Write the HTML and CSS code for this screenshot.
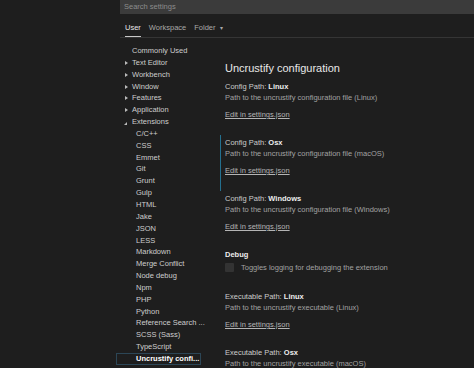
FILE: index.html
```html
<!DOCTYPE html>
<html>
<head>
    <title>Settings</title>
    <meta name="viewport" content="width=device-width, initial-scale=1.0">
    <link rel="stylesheet" href="styles.css">
</head>
<body>
    <div class="editor">
        <div class="search">Search settings</div>

        <div class="tabs">
            <span class="tab active">User</span>
            <span class="tab">Workspace</span>
            <span class="tab">Folder <span class="caret">&#9662;</span></span>
        </div>

        <div class="main">
            <ul class="tree">
                <li class="node">Commonly Used</li>
                <li class="node folder">Text Editor</li>
                <li class="node folder">Workbench</li>
                <li class="node folder">Window</li>
                <li class="node folder">Features</li>
                <li class="node folder">Application</li>
                <li class="node folder open">Extensions</li>
                <li class="node child">C/C++</li>
                <li class="node child">CSS</li>
                <li class="node child">Emmet</li>
                <li class="node child">Git</li>
                <li class="node child">Grunt</li>
                <li class="node child">Gulp</li>
                <li class="node child">HTML</li>
                <li class="node child">Jake</li>
                <li class="node child">JSON</li>
                <li class="node child">LESS</li>
                <li class="node child">Markdown</li>
                <li class="node child">Merge Conflict</li>
                <li class="node child">Node debug</li>
                <li class="node child">Npm</li>
                <li class="node child">PHP</li>
                <li class="node child">Python</li>
                <li class="node child">Reference Search ...</li>
                <li class="node child">SCSS (Sass)</li>
                <li class="node child">TypeScript</li>
                <li class="node child selected">Uncrustify confi...</li>
            </ul>

            <div class="content">
                <h2>Uncrustify configuration</h2>

                <div class="setting">
                    <div class="label">Config Path: <b>Linux</b></div>
                    <div class="desc">Path to the uncrustify configuration file (Linux)</div>
                    <a class="edit">Edit in settings.json</a>
                </div>

                <div class="setting focused">
                    <div class="label">Config Path: <b>Osx</b></div>
                    <div class="desc">Path to the uncrustify configuration file (macOS)</div>
                    <a class="edit">Edit in settings.json</a>
                </div>

                <div class="setting">
                    <div class="label">Config Path: <b>Windows</b></div>
                    <div class="desc">Path to the uncrustify configuration file (Windows)</div>
                    <a class="edit">Edit in settings.json</a>
                </div>

                <div class="setting debug">
                    <div class="label"><b>Debug</b></div>
                    <div class="check-row">
                        <span class="checkbox"></span>
                        <span class="desc">Toggles logging for debugging the extension</span>
                    </div>
                </div>

                <div class="setting">
                    <div class="label">Executable Path: <b>Linux</b></div>
                    <div class="desc">Path to the uncrustify executable (Linux)</div>
                    <a class="edit">Edit in settings.json</a>
                </div>

                <div class="setting">
                    <div class="label">Executable Path: <b>Osx</b></div>
                    <div class="desc">Path to the uncrustify executable (macOS)</div>
                </div>
            </div>
        </div>
    </div>
</body>
</html>
```

FILE: styles.css
```css
html, body {
    margin: 0;
    height: 100%;
    overflow: hidden;
}

body {
    background: #1e1e1e;
    color: #cccccc;
    font-family: "Liberation Sans", Arial, sans-serif;
    font-size: 7.5px;
}

.editor {
    margin-left: 120px;
}

.search {
    height: 14px;
    line-height: 14px;
    background: #3b3b3b;
    color: #8c8c8c;
    padding-left: 4px;
}

.tabs {
    display: flex;
    gap: 8px;
    height: 24px;
    padding: 6px 0 0 5px;
    border-bottom: 1px solid #353535;
    box-sizing: border-box;
}

.tab {
    line-height: 16px;
    color: #a8a8a8;
}

.tab.active {
    color: #e6e6e6;
    border-bottom: 1px solid #c8c8c8;
}

.caret {
    font-size: 6px;
    margin-left: 2px;
}

.main {
    display: flex;
}

/* 左侧目录 */
.tree {
    list-style: none;
    margin: 0;
    padding: 7px 0 0 0;
    width: 81px;
}

.node {
    height: 11.85px;
    line-height: 11.85px;
    padding-left: 12px;
    position: relative;
    white-space: nowrap;
    color: #cdcdcd;
}

.node.folder::before {
    content: "";
    position: absolute;
    left: 5px;
    top: 4px;
    border-left: 3px solid #bbbbbb;
    border-top: 2px solid transparent;
    border-bottom: 2px solid transparent;
}

.node.open::before {
    left: 4px;
    top: 3px;
    border-left: 3px solid transparent;
    border-top: 3px solid transparent;
    border-bottom: 3px solid #bbbbbb;
    border-right: 0;
}

.node.child {
    padding-left: 16px;
}

.node.selected {
    margin-left: -4px;
    padding-left: 20px;
    color: #ffffff;
    font-weight: bold;
    outline: 1px solid #2c4656;
    outline-offset: -1px;
}

/* 右侧内容 */
.content {
    padding: 22px 0 0 19px;
    flex: 1;
}

.content h2 {
    margin: 0 0 3px 5px;
    font-size: 11px;
    font-weight: normal;
    color: #e8e8e8;
    line-height: 16px;
}

.setting {
    padding: 2px 0 15px 4px;
    border-left: 1px solid transparent;
}

.setting.focused {
    border-left-color: #24708f;
}

.label {
    line-height: 11px;
    color: #cccccc;
}

.label b {
    color: #ededed;
}

.desc {
    line-height: 11px;
    color: #a2a2a2;
}

.edit {
    display: inline-block;
    margin-top: 6px;
    line-height: 11px;
    color: #b4b4b4;
    text-decoration: underline;
}

.setting.debug {
    padding-bottom: 16px;
}

.check-row {
    display: flex;
    align-items: center;
    gap: 7px;
    margin-top: 2px;
}

.checkbox {
    width: 9px;
    height: 9px;
    background: #333333;
    border-radius: 1px;
}
```
